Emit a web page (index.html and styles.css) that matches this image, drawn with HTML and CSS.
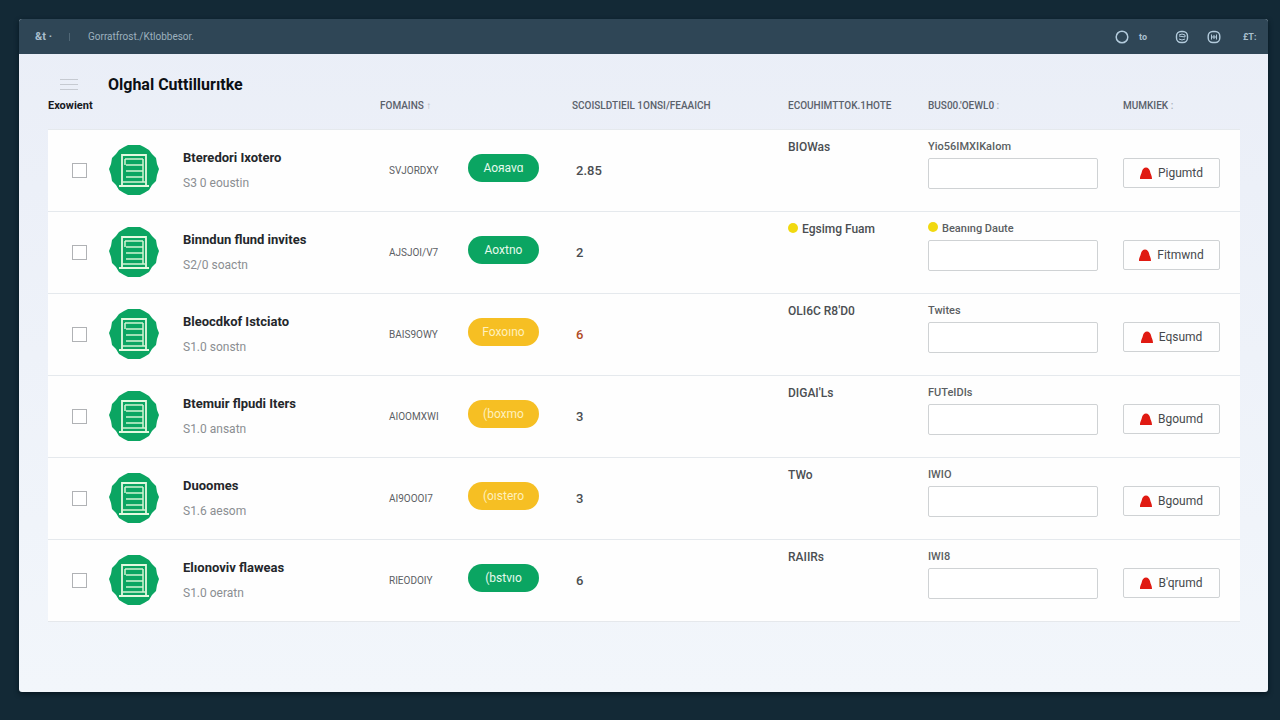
FILE: index.html
```html
<!DOCTYPE html>
<html lang="en">
<head>
<meta charset="utf-8">
<title>Olghal Cuttillurıtke</title>
<link rel="stylesheet" href="styles.css">
</head>
<body>
<svg class="sprite" aria-hidden="true">
  <symbol id="doc" viewBox="0 0 52 52">
    <path fill="#0ba562" d="M20 1h12l4 2 5 3 3 4 4 4 1 6 2 5-2 6-1 6-4 4-3 5-5 3-4 2H20l-4-2-5-3-3-5-4-4-1-6-2-6 2-5 1-6 4-4 3-4 5-3z"/>
    <path fill="none" stroke="#e4f9e0" stroke-width="1.800" d="M14 41V11h24v30M11 42h30"/>
    <path fill="none" stroke="#d2f4d2" stroke-width="1.500" d="M17 15h18M18 21h17M18 27h17M18 33h17M14 38h24M17 15v6M35 15v23"/>
  </symbol>
  <symbol id="bell" viewBox="0 0 12 12">
    <path fill="#e01a12" d="M0 12C0 8.500 1.200 8 1.800 5 2.400 2 4 .5 6 .5S9.600 2 10.200 5C10.800 8 12 8.500 12 12z"/>
  </symbol>
</svg>
<div class="window">
  <header class="topbar">
    <span class="brand">&amp;t ·</span>
    <span class="divider"></span>
    <span class="crumb">Gorratfrost./Ktlobbesor.</span>
    <nav class="tools">
      <button type="button" class="tool" aria-label="Status"><svg width="14" height="14" viewBox="0 0 14 14"><circle cx="7" cy="7" r="5.800" fill="none" stroke="currentColor" stroke-width="1.500"/></svg></button>
      <span class="tag">to</span>
      <button type="button" class="tool help" aria-label="Help"><svg width="14" height="14" viewBox="0 0 14 14" fill="none" stroke="currentColor"><rect x="1.500" y="1.500" width="11" height="11" rx="4.500" stroke-width="1.400"/><path d="M4 5l3-1 3 1v2L4 6M10 9L7 10 4 9"/></svg></button>
      <button type="button" class="tool" aria-label="Apps"><svg width="14" height="14" viewBox="0 0 14 14" fill="none" stroke="currentColor"><rect x="1.200" y="1.500" width="11.600" height="11" rx="4.500" stroke-width="1.400"/><path d="M4.500 4.500v5M9.500 4.500v5M4.500 7h5M7 5v4"/></svg></button>
      <span class="tag lang">£T:</span>
    </nav>
  </header>
  <main class="page">
    <div class="heading">
      <button type="button" class="menu" aria-label="Menu"><span></span><span></span><span></span></button>
      <h1>Olghal Cuttillurıtke</h1>
    </div>
    <table class="grid">
      <colgroup><col class="c-check"><col class="c-icon"><col class="c-name"><col class="c-state"><col class="c-pill"><col class="c-score"><col class="c-type"><col class="c-field"><col class="c-action"></colgroup>
      <thead>
        <tr>
          <th class="first" colspan="3">Exowient</th>
          <th colspan="2">FOMAINS <i>↑</i></th>
          <th>SCOISLDTIEIL 1ONSI/FEAAICH</th>
          <th>ECOUHIMTTOK.1HOTE</th>
          <th>BUS00.'OEWL0 <i>:</i></th>
          <th>MUMKIEK <i>:</i></th>
        </tr>
      </thead>
      <tbody>
        <tr>
          <td class="check"><input type="checkbox" aria-label="Bteredori Ixotero"></td>
          <td><svg class="badge"><use href="#doc"/></svg></td>
          <td class="name"><strong>Bteredori Ixotero</strong><small>S3 0 eoustin</small></td>
          <td class="state">SVJORDXY</td>
          <td><span class="pill">Aoяavɑ</span></td>
          <td class="score">2.85</td>
          <td class="type">BIOWas</td>
          <td class="field"><label for="f1">Yio56IMXIKaIom</label><input type="text" id="f1"></td>
          <td class="action"><button type="button"><svg><use href="#bell"/></svg>Pigumtd</button></td>
        </tr>
        <tr>
          <td class="check"><input type="checkbox" aria-label="Binndun. flund invites"></td>
          <td><svg class="badge"><use href="#doc"/></svg></td>
          <td class="name"><strong>Binndun flund invites</strong><small>S2/0 soactn</small></td>
          <td class="state">AJSJOI/V7</td>
          <td><span class="pill">Aoxtno</span></td>
          <td class="score">2</td>
          <td class="type"><span class="dot"></span>Egsimg Fuam</td>
          <td class="field"><label for="f2"><span class="dot"></span>Beanıng Daute</label><input type="text" id="f2"></td>
          <td class="action"><button type="button"><svg><use href="#bell"/></svg>Fitmwnd</button></td>
        </tr>
        <tr>
          <td class="check"><input type="checkbox" aria-label="Bleocdkof Istciuato"></td>
          <td><svg class="badge"><use href="#doc"/></svg></td>
          <td class="name"><strong>Bleocdkof Istciato</strong><small>S1.0 sonstn</small></td>
          <td class="state">BAIS9OWY</td>
          <td><span class="pill warn">Foxoıno</span></td>
          <td class="score alert">6</td>
          <td class="type">OLI6C R8'D0</td>
          <td class="field"><label for="f3">Twites</label><input type="text" id="f3"></td>
          <td class="action"><button type="button"><svg><use href="#bell"/></svg>Eqsumd</button></td>
        </tr>
        <tr>
          <td class="check"><input type="checkbox" aria-label="Btemuire flpudi Iters"></td>
          <td><svg class="badge"><use href="#doc"/></svg></td>
          <td class="name"><strong>Btemuir flpudi Iters</strong><small>S1.0 ansatn</small></td>
          <td class="state">AIOOMXWI</td>
          <td><span class="pill warn">(boxmo</span></td>
          <td class="score">3</td>
          <td class="type">DIGAI'Ls</td>
          <td class="field"><label for="f4">FUTeIDIs</label><input type="text" id="f4"></td>
          <td class="action"><button type="button"><svg><use href="#bell"/></svg>Bgoumd</button></td>
        </tr>
        <tr>
          <td class="check"><input type="checkbox" aria-label="Duoomes"></td>
          <td><svg class="badge"><use href="#doc"/></svg></td>
          <td class="name"><strong>Duoomes</strong><small>S1.6 aesom</small></td>
          <td class="state">AI9OOOI7</td>
          <td><span class="pill warn">(oıstero</span></td>
          <td class="score">3</td>
          <td class="type">TWo</td>
          <td class="field"><label for="f5">IWIO</label><input type="text" id="f5"></td>
          <td class="action"><button type="button"><svg><use href="#bell"/></svg>Bgoumd</button></td>
        </tr>
        <tr>
          <td class="check"><input type="checkbox" aria-label="Elıonoviv flaweas"></td>
          <td><svg class="badge"><use href="#doc"/></svg></td>
          <td class="name"><strong>Elıonoviv flaweas</strong><small>S1.0 oeratn</small></td>
          <td class="state">RIEODOIY</td>
          <td><span class="pill">(bstvıo</span></td>
          <td class="score">6</td>
          <td class="type">RAIIRs</td>
          <td class="field"><label for="f6">IWI8</label><input type="text" id="f6"></td>
          <td class="action"><button type="button"><svg><use href="#bell"/></svg>B'qrumd</button></td>
        </tr>
      </tbody>
    </table>
  </main>
</div>
</body>
</html>
```
FILE: styles.css
```css
* { box-sizing: border-box; }
body {
  margin: 0;
  min-height: 100vh;
  padding: 19px 12px 28px 19px;
  display: flex;
  background: #132936;
  color: #25282c;
  font-family: Roboto, "Liberation Sans", sans-serif;
  font-size: 12px;
}
.sprite { position: absolute; width: 0; height: 0; }
button { font: inherit; color: inherit; cursor: pointer; }
.window {
  flex: 1;
  display: flex;
  flex-direction: column;
  border-radius: 3px;
  overflow: hidden;
  background: linear-gradient(#eaeef7, #f2f6fb);
  box-shadow: 0 2px 5px #061620;
}
.topbar {
  height: 35px;
  flex: none;
  display: flex;
  align-items: center;
  padding: 0 11px 0 16px;
  background: #2f4656;
  color: #a9bfce;
}
.brand { width: 34px; font-size: 11px; font-weight: 700; }
.divider { width: 1px; height: 8px; background: #506776; }
.crumb { margin-left: 18px; font-size: 10px; color: #9db1be; }
.tools { margin-left: auto; display: flex; align-items: center; }
.tool { display: flex; padding: 0; border: 0; background: none; color: #b3cbdc; }
.tag { margin-left: 10px; width: 26px; font-size: 9px; font-weight: 700; }
.help { margin: 0 18px 0 10px; }
.lang { width: 14px; margin-left: 22px; }
.page { padding: 0 28px 28px 29px; }
.heading { height: 41px; display: flex; align-items: flex-end; }
.menu {
  width: 18px;
  height: 16px;
  margin: 0 30px 0 12px;
  padding: 0 0 5px;
  display: flex;
  flex-direction: column;
  justify-content: space-between;
  border: 0;
  background: none;
}
.menu span { height: 1px; background: #c6cad1; }
h1 { margin: 0; font-size: 16px; line-height: 20px; color: #0c0f14; }
.grid { width: 100%; border-collapse: collapse; table-layout: fixed; }
.c-check { width: 60px; }
.c-icon { width: 75px; }
.c-state { width: 88px; }
.c-pill { width: 104px; }
.c-score { width: 216px; }
.c-type { width: 140px; }
.c-field { width: 195px; }
.c-action { width: 117px; }
th {
  height: 34px;
  padding: 4px 0 0;
  vertical-align: top;
  text-align: left;
  white-space: nowrap;
  font-size: 10px;
  line-height: 14px;
  font-weight: 500;
  color: #5a616b;
}
th.first { font-size: 11px; font-weight: 700; color: #171a1f; }
th i { font-style: normal; color: #a9b0ba; }
tbody { background: #fefefe; }
tbody tr { height: 82px; border-top: 1px solid #e5e9ed; }
tbody tr:last-child { border-bottom: 1px solid #e5e8ec; }
td { padding: 0; vertical-align: middle; }
.check { padding-left: 24px; }
.check input {
  appearance: none;
  display: block;
  width: 15px;
  height: 15px;
  margin: 0;
  border: 1px solid #b0b2b5;
  background: #fff;
}
.check input:checked { background: #0ba562; }
.badge { display: block; width: 52px; height: 52px; }
.name strong { display: block; font-size: 13px; line-height: 18px; color: #24272b; }
.name small { display: block; margin-top: 8px; font-size: 12px; line-height: 16px; color: #8b8e92; }
.state { padding-left: 9px; font-size: 10px; color: #5c6064; }
.pill {
  display: block;
  width: 71px;
  margin-bottom: 5px;
  border-radius: 14px;
  background: #0ba562;
  color: #e6faed;
  font-size: 12px;
  line-height: 28px;
  text-align: center;
}
.pill.warn { background: #f6bf23; color: #fff0bd; }
.score { padding-left: 4px; font-size: 13px; font-weight: 500; color: #4a4d51; }
.score.alert { color: #b04a25; }
.type { padding-top: 9px; vertical-align: top; font-size: 12px; line-height: 16px; font-weight: 500; color: #4b4e52; }
.dot { display: inline-block; width: 10px; height: 10px; margin-right: 4px; border-radius: 5px; background: #f1d910; }
.field { padding-top: 9px; vertical-align: top; }
.field label { display: block; height: 19px; font-size: 11px; line-height: 16px; font-weight: 500; color: #5b5e62; }
.field input {
  display: block;
  width: 170px;
  height: 31px;
  border: 1px solid #cfd2d4;
  border-radius: 2px;
  background: #fff;
}
.action { padding-top: 5px; }
.action button {
  display: flex;
  align-items: center;
  justify-content: center;
  gap: 6px;
  width: 97px;
  height: 30px;
  padding: 0;
  border: 1px solid #cfd2d4;
  border-radius: 2px;
  background: #fefefe;
  color: #46494d;
}
.action svg { width: 12px; height: 12px; }
```
